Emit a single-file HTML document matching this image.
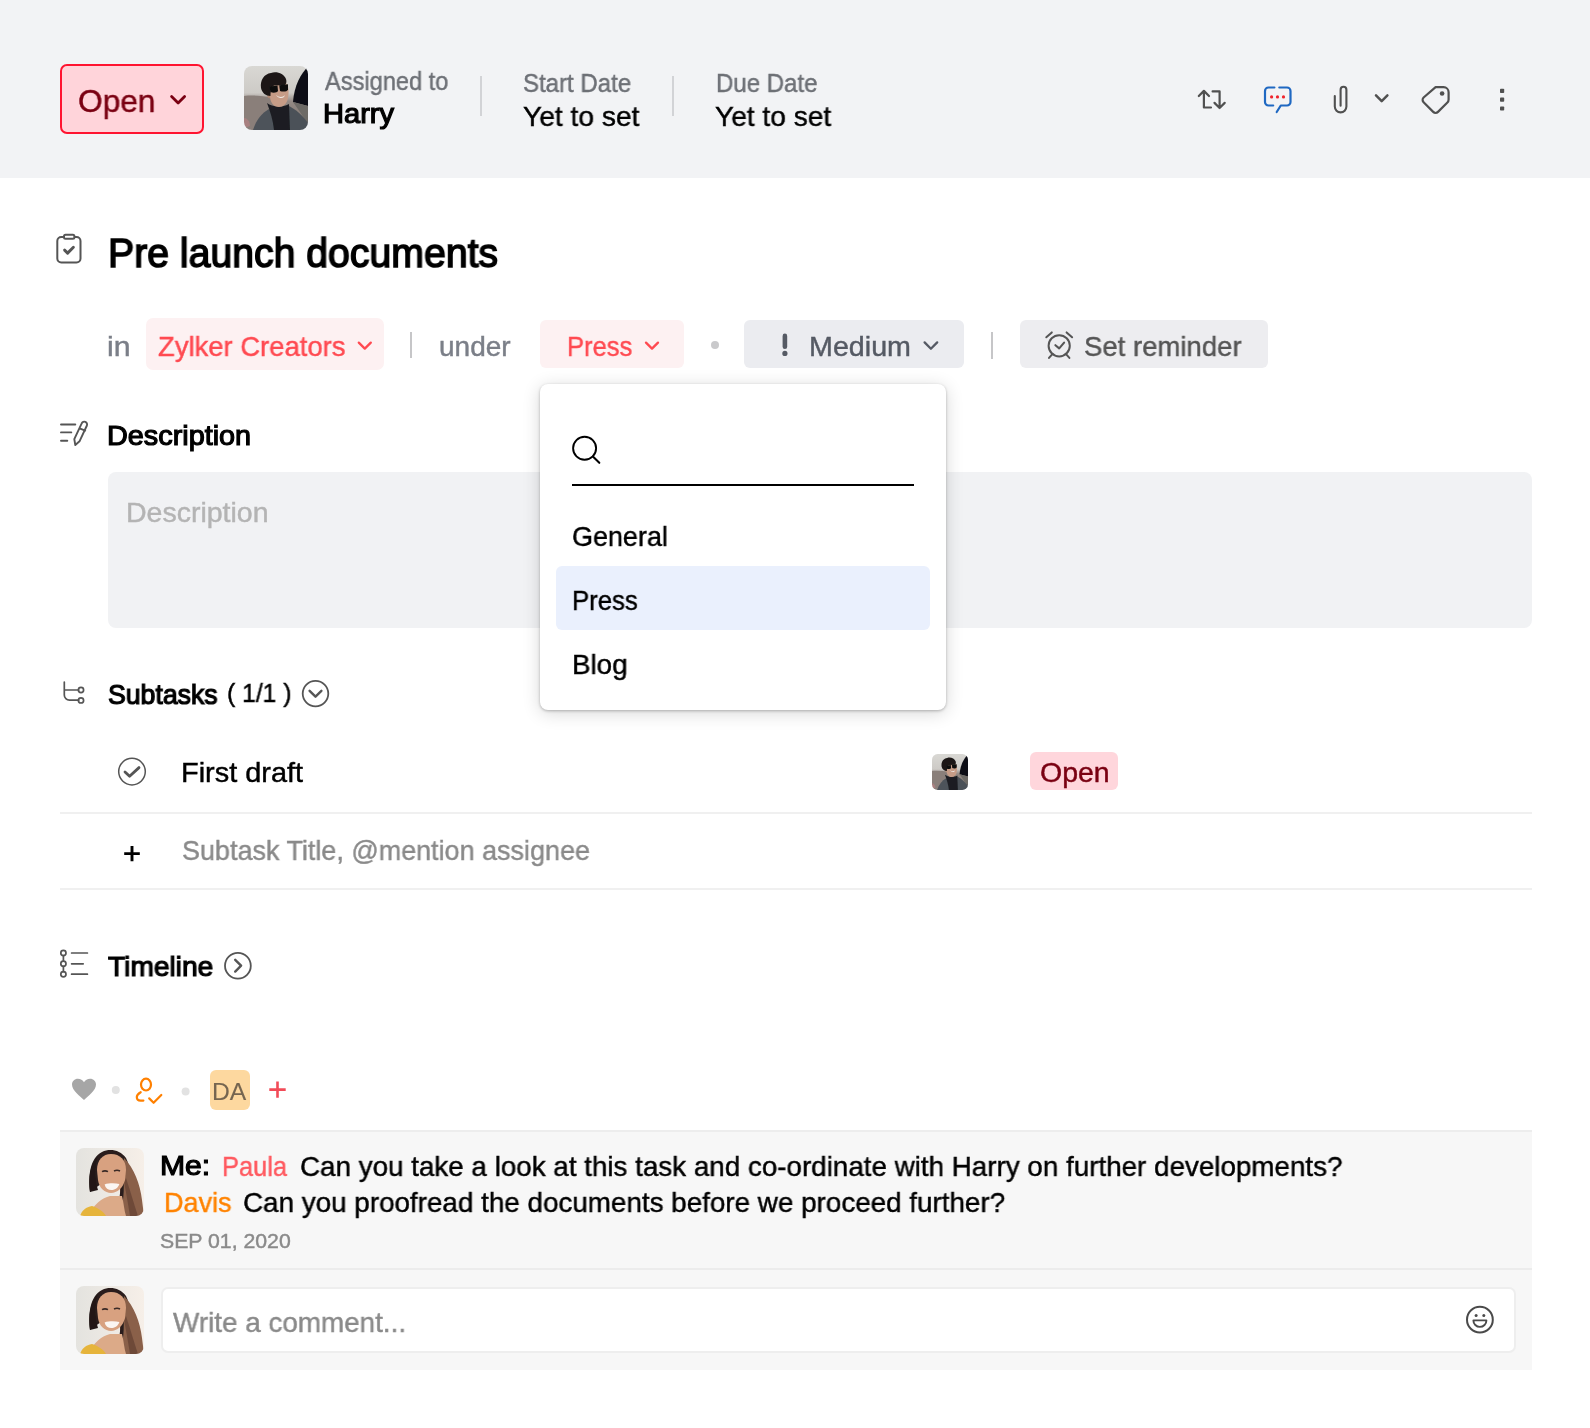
<!DOCTYPE html>
<html><head><meta charset="utf-8"><title>Task</title>
<style>
html,body{margin:0;padding:0;width:1590px;height:1428px;overflow:hidden;background:#fff;font-family:"Liberation Sans",sans-serif}
.t{position:absolute;white-space:nowrap;transform-origin:0 0;will-change:transform;-webkit-text-stroke:0.45px currentColor}
.t.b{-webkit-text-stroke:1.2px currentColor}
#title{-webkit-text-stroke:1.5px currentColor}
.a{position:absolute}
svg{position:absolute;overflow:visible}

#da{-webkit-text-stroke:0.1px currentColor}


</style></head>
<body>
<div id="shapes">
<!-- header band -->
<div class="a" style="left:0;top:0;width:1590px;height:178px;background:#f2f3f5"></div>
<div class="a" style="left:60px;top:64px;width:140px;height:66px;border:2px solid #ff1330;border-radius:7px;background:#ffd4da"></div>
<div class="a" style="left:480px;top:76px;width:2px;height:40px;background:#d2d3d6"></div>
<div class="a" style="left:672px;top:76px;width:2px;height:40px;background:#d2d3d6"></div>

<!-- avatar harry -->
<svg style="left:244px;top:66px" width="64" height="64" viewBox="0 0 64 64">
 <defs><filter id="bl" x="-5%" y="-5%" width="110%" height="110%"><feGaussianBlur stdDeviation="0.7"/></filter><clipPath id="ch1"><rect width="64" height="64" rx="8"/></clipPath>
 <linearGradient id="hb" x1="0" y1="0" x2="0" y2="1"><stop offset="0" stop-color="#d9d8d4"/><stop offset="0.42" stop-color="#cdcac6"/><stop offset="0.55" stop-color="#948a85"/><stop offset="1" stop-color="#7a706b"/></linearGradient></defs>
 <g clip-path="url(#ch1)"><g filter="url(#bl)">
  <rect width="64" height="64" fill="url(#hb)"/>
  <path d="M0 30 C10 29 20 30 30 32 L30 64 L0 64 Z" fill="#8a7f7a"/>
  <path d="M0 52 C3 52 6 55 6 60 L0 62 Z" fill="#a88080"/>
  <path d="M64 1 C57 7 50 20 49 36 L64 40 Z" fill="#0f1019"/>
  <path d="M49 36 L64 40 L64 58 L56 46 Z" fill="#6d6a66"/>
  <path d="M9 64 C12 54 18 47 25 43 L34 50 L38 64 Z" fill="#4d535a"/>
  <path d="M43 39 C52 43 60 51 64 57 L64 64 L40 64 Z" fill="#4b5158"/>
  <path d="M23 37 C28 41 37 42 45 38 L46 64 L30 64 C29 54 26 45 23 37 Z" fill="#1c1f23"/>
  <ellipse cx="25.5" cy="29" rx="2.2" ry="3.2" fill="#b38873"/>
  <path d="M26 19 L42 17 C45 20 45 27 44 32 C43 38 39 41 35 41 C30 41 26.5 37 26 31 Z" fill="#c69c87"/>
  <path d="M17 22 C16 14 20 8 27 7 C33 5 40 8 42 13 C43 16 42 18 41 19 L30 19.5 C27.5 21 26.5 25 26.5 30 C22 30 18 27 17 22 Z" fill="#1b1717"/>
  <path d="M25.5 20.5 L33.5 19.6 L34 25 C33 27 28.5 27 26.5 26 Z" fill="#111"/>
  <path d="M35.2 19.3 L44 18.2 L44 23.5 C43 26 38.5 26 36 25 Z" fill="#111"/>
  <path d="M32 29 C35 31.5 39 31.5 41 29 L40 31 C38 32.5 34 32.5 32 29 Z" fill="#f1ece8"/>
</g></g>
</svg>

<!-- header icons -->
<svg style="left:0;top:0" width="1590" height="180">
 <g fill="none" stroke="#505050" stroke-width="2.2" stroke-linecap="round" stroke-linejoin="round">
  <path d="M1198.8 96 L1203.9 90.9 L1209 96 M1203.9 91 V107.5 H1211"/>
  <path d="M1212.6 91.4 H1219.6 V108 M1214.5 102.9 L1219.6 108 L1224.7 102.9"/>
  <path d="M1334.8 96 V106.6 A5.8 5.8 0 0 0 1346.4 106.6 V89.7 A2.9 2.9 0 0 0 1340.6 89.7 V105.7" stroke-width="2.1"/>
  <path d="M1376 95.4 L1381.7 101.1 L1387.4 95.4" stroke-width="2.5"/>
  <path d="M1435.6 87.2 H1443.6 A5 5 0 0 1 1448.6 92.2 V99.6 A4 4 0 0 1 1447.4 102.5 L1438 111.9 A3.4 3.4 0 0 1 1433.2 111.9 L1423.6 102.3 A3.4 3.4 0 0 1 1423.6 97.5 Z"/>
 </g>
 <circle cx="1442.1" cy="93.5" r="2.3" fill="#505050"/>
 <g fill="#505050"><rect x="1500" y="88.8" width="4.2" height="4.2" rx="0.8"/><rect x="1500" y="97.6" width="4.2" height="4.2" rx="0.8"/><rect x="1500" y="106.4" width="4.2" height="4.2" rx="0.8"/></g>
 <g fill="none" stroke="#1f68c2" stroke-width="2.2" stroke-linecap="round" stroke-linejoin="round">
  <path d="M1274.4 87.5 H1268.5 A3.5 3.5 0 0 0 1265 91 V102 A3.5 3.5 0 0 0 1268.5 105.5 H1273.2"/>
  <path d="M1279.3 87.5 H1287 A3.5 3.5 0 0 1 1290.5 91 V102 A3.5 3.5 0 0 1 1287 105.5 H1280.8 L1276.7 112"/>
 </g>
 <g fill="#f0232b"><circle cx="1271.6" cy="96.9" r="1.6"/><circle cx="1277.5" cy="96.9" r="1.6"/><circle cx="1283.5" cy="96.9" r="1.6"/></g>
 <path d="M171.6 96.5 L178.1 103 L184.6 96.5" fill="none" stroke="#7a0012" stroke-width="2.8" stroke-linecap="round" stroke-linejoin="round"/>
</svg>

<!-- meta pills -->
<div class="a" style="left:146px;top:318px;width:238px;height:52px;border-radius:7px;background:#fdf1f2"></div>
<div class="a" style="left:410px;top:332px;width:2px;height:26px;background:#c6c6c8"></div>
<div class="a" style="left:540px;top:320px;width:144px;height:48px;border-radius:6px;background:#fdf1f2"></div>
<div class="a" style="left:710.6px;top:341.3px;width:8px;height:8px;border-radius:50%;background:#c9c9cb"></div>
<div class="a" style="left:744px;top:320px;width:220px;height:48px;border-radius:6px;background:#ebecf0"></div>
<div class="a" style="left:990.5px;top:332px;width:2px;height:26.5px;background:#c6c6c8"></div>
<div class="a" style="left:1020px;top:320px;width:248px;height:48px;border-radius:6px;background:#ededf0"></div>

<!-- description box -->
<div class="a" style="left:108px;top:472px;width:1424px;height:156px;border-radius:8px;background:#f1f2f4"></div>

<!-- subtask separators -->
<div class="a" style="left:60px;top:812px;width:1472px;height:2px;background:#f0f0f0"></div>
<div class="a" style="left:60px;top:888px;width:1472px;height:2px;background:#f0f0f0"></div>

<!-- Open badge -->
<div class="a" style="left:1030px;top:752px;width:88px;height:38px;border-radius:6px;background:#ffd6dc"></div>

<!-- DA badge -->
<div class="a" style="left:210px;top:1070px;width:40px;height:40px;border-radius:6px;background:#fdd89f"></div>

<!-- comment block -->
<div class="a" style="left:60px;top:1130px;width:1472px;height:240px;background:#f7f7f7"></div>
<div class="a" style="left:60px;top:1130px;width:1472px;height:2px;background:#ededed"></div>
<div class="a" style="left:60px;top:1268px;width:1472px;height:2px;background:#ececec"></div>
<div class="a" style="left:161px;top:1287px;width:1351px;height:62px;border:2px solid #eeeeee;border-radius:7px;background:#fff"></div>

<!-- main icons -->
<svg style="left:0;top:180px" width="1590" height="1248" viewBox="0 180 1590 1248">
 <g fill="none" stroke="#555" stroke-width="2" stroke-linecap="round" stroke-linejoin="round">
  <!-- clipboard -->
  <path d="M63.6 237.1 H61.3 A4 4 0 0 0 57.3 241.1 V258.5 A4 4 0 0 0 61.3 262.5 H76.5 A4 4 0 0 0 80.5 258.5 V241.1 A4 4 0 0 0 76.5 237.1 H74.7"/>
  <rect x="64" y="234.8" width="10.4" height="4" rx="1.5"/>
  <path d="M64.6 250.1 L67.6 253.1 L73.4 247.3" stroke-width="2.9"/>
  <!-- desc icon -->
  <path d="M61 424.5 H75.3 M61 432.4 H71.3 M61 440.7 H67.3" stroke-width="1.9"/>
  <path d="M75.3 445 L74.3 439.2 L81.7 423.4 A2.8 2.8 0 0 1 86.9 425.5 L79.5 441.3 Z M80.2 428.6 L85.2 430.6" stroke-width="1.9"/>
  <!-- subtasks icon -->
  <path d="M64.3 682 V695 A5.2 5.2 0 0 0 69.5 700.2 H78.6 M64.3 690 H78.6" stroke-width="1.7"/>
  <circle cx="81" cy="690" r="2.6" stroke-width="1.7"/>
  <circle cx="81" cy="700.4" r="2.6" stroke-width="1.7"/>
  <circle cx="315.5" cy="693.6" r="12.8" stroke-width="1.8"/>
  <path d="M309.6 690.8 L315.5 696.7 L321.4 690.8" stroke-width="2.4"/>
  <!-- check circle -->
  <circle cx="132" cy="771.6" r="13.3" stroke-width="1.5"/>
  <path d="M125 772 L129.6 776.3 L139 767.6" stroke-width="2.8"/>
  <!-- plus -->
  <path d="M132 846 V861.3 M124.2 853.6 H139.8" stroke="#000" stroke-width="2.9" stroke-linecap="butt"/>
  <!-- timeline icon -->
  <circle cx="63.4" cy="953" r="2.6" stroke-width="1.7"/>
  <circle cx="63.4" cy="963.8" r="2.6" stroke-width="1.7"/>
  <circle cx="63.4" cy="974.2" r="2.6" stroke-width="1.7"/>
  <path d="M63.4 955.6 V961.2 M63.4 966.4 V971.6 M71.6 953 H87.4 M71.6 963.8 H83.2 M71.6 974.2 H87.4" stroke-width="1.7"/>
  <circle cx="237.9" cy="965.7" r="12.9" stroke-width="1.8"/>
  <path d="M235.2 959.8 L241.1 965.7 L235.2 971.6" stroke-width="2.4"/>
  <!-- emoji -->
  <circle cx="1479.9" cy="1319.7" r="12.9" stroke="#4a4a4a" stroke-width="2"/>
  <path d="M1473.4 1320.4 H1486.4 A6.5 6.5 0 0 1 1473.4 1320.4 Z" stroke="#4a4a4a" stroke-width="1.9"/>
 </g>
 <g fill="#4a4a4a"><circle cx="1476.1" cy="1315.6" r="1.5"/><circle cx="1483.8" cy="1315.6" r="1.5"/></g>
 <!-- meta row icons -->
 <path d="M358.8 342.6 L364.8 348.6 L370.8 342.6" fill="none" stroke="#ff4a51" stroke-width="2.3" stroke-linecap="round" stroke-linejoin="round"/>
 <path d="M646 342.6 L652 348.6 L658 342.6" fill="none" stroke="#ff4a51" stroke-width="2.3" stroke-linecap="round" stroke-linejoin="round"/>
 <path d="M924.6 342.4 L930.9 348.7 L937.2 342.4" fill="none" stroke="#555a64" stroke-width="2.3" stroke-linecap="round" stroke-linejoin="round"/>
 <rect x="782.6" y="333.6" width="4.6" height="15.5" rx="2.3" fill="#555a64"/>
 <circle cx="784.9" cy="353.4" r="2.6" fill="#555a64"/>
 <g fill="none" stroke="#555" stroke-width="2" stroke-linecap="round" stroke-linejoin="round">
  <circle cx="1059.2" cy="345.8" r="10.6"/>
  <path d="M1046.3 337.3 L1051.8 332.4 M1066.6 332.4 L1072.1 337.3 M1052.6 353.8 L1049 357.9 M1065.8 353.8 L1069.4 357.9"/>
  <path d="M1055.4 345.2 L1059.2 348.4 L1064.1 342.6" stroke-width="2.1"/>
 </g>
 <!-- reactions -->
 <path d="M84 1100 C80 1096.4 72 1090.6 72 1084.6 C72 1081.2 74.6 1078.8 77.9 1078.8 C80.6 1078.8 82.7 1080.3 84 1082.3 C85.3 1080.3 87.4 1078.8 90.1 1078.8 C93.4 1078.8 96 1081.2 96 1084.6 C96 1090.6 88 1096.4 84 1100 Z" fill="#a6a6a6"/>
 <circle cx="115.8" cy="1090" r="4" fill="#e2e2e2"/>
 <circle cx="185.6" cy="1091.6" r="4" fill="#e2e2e2"/>
 <g fill="none" stroke="#ff8000" stroke-width="2.2" stroke-linecap="round" stroke-linejoin="round">
  <ellipse cx="146" cy="1084.6" rx="5" ry="5.9"/>
  <path d="M140.7 1092.2 C138.2 1093.6 136.8 1095.4 136.8 1097 C136.8 1099.4 138.4 1100.6 140.6 1100.6 H143.4"/>
  <path d="M149.2 1098.4 L153.6 1102.8 L161.3 1095"/>
 </g>
 <path d="M277.5 1081.4 V1097.8 M269.3 1089.6 H285.7" stroke="#f24b58" stroke-width="2.6"/>
</svg>

<!-- subtask avatar -->
<svg style="left:932px;top:754px" width="36" height="36" viewBox="0 0 64 64">
 <defs><clipPath id="ch2"><rect width="64" height="64" rx="10"/></clipPath></defs>
 <g clip-path="url(#ch2)"><g filter="url(#bl)">
  <rect width="64" height="64" fill="url(#hb)"/>
  <path d="M0 30 C10 29 20 30 30 32 L30 64 L0 64 Z" fill="#8a7f7a"/>
  <path d="M0 52 C3 52 6 55 6 60 L0 62 Z" fill="#a88080"/>
  <path d="M64 1 C57 7 50 20 49 36 L64 40 Z" fill="#0f1019"/>
  <path d="M49 36 L64 40 L64 58 L56 46 Z" fill="#6d6a66"/>
  <path d="M9 64 C12 54 18 47 25 43 L34 50 L38 64 Z" fill="#4d535a"/>
  <path d="M43 39 C52 43 60 51 64 57 L64 64 L40 64 Z" fill="#4b5158"/>
  <path d="M23 37 C28 41 37 42 45 38 L46 64 L30 64 C29 54 26 45 23 37 Z" fill="#1c1f23"/>
  <ellipse cx="25.5" cy="29" rx="2.2" ry="3.2" fill="#b38873"/>
  <path d="M26 19 L42 17 C45 20 45 27 44 32 C43 38 39 41 35 41 C30 41 26.5 37 26 31 Z" fill="#c69c87"/>
  <path d="M17 22 C16 14 20 8 27 7 C33 5 40 8 42 13 C43 16 42 18 41 19 L30 19.5 C27.5 21 26.5 25 26.5 30 C22 30 18 27 17 22 Z" fill="#1b1717"/>
  <path d="M25.5 20.5 L33.5 19.6 L34 25 C33 27 28.5 27 26.5 26 Z" fill="#111"/>
  <path d="M35.2 19.3 L44 18.2 L44 23.5 C43 26 38.5 26 36 25 Z" fill="#111"/>
  <path d="M32 29 C35 31.5 39 31.5 41 29 L40 31 C38 32.5 34 32.5 32 29 Z" fill="#f1ece8"/>
</g></g>
</svg>

<!-- woman avatars -->
<svg style="left:76px;top:1148px" width="68" height="68" viewBox="0 0 68 68">
 <defs><clipPath id="cw"><rect width="68" height="68" rx="8"/></clipPath>
 <linearGradient id="wb" x1="0" y1="0" x2="1" y2="0"><stop offset="0" stop-color="#e4e3df"/><stop offset="1" stop-color="#f6efe8"/></linearGradient></defs>
 <g clip-path="url(#cw)"><g filter="url(#bl)">
  <rect width="68" height="68" fill="url(#wb)"/>
  <path d="M44 10 C54 18 58 34 62 50 C64 58 66 64 68 68 L44 68 Z" fill="#7e5642"/>
  <path d="M14 44 C12 28 14 10 26 4 C34 0 44 2 50 10 C54 18 54 26 52 34 L50 50 L44 68 L40 68 C44 50 46 36 44 22 Z" fill="#2a1f1d"/>
  <path d="M48 10 C58 20 64 36 66 52 L68 68 L44 68 C47 56 49 42 47 26 Z" fill="#8a604a"/><path d="M50 30 C54 42 58 56 62 68 L54 68 C52 56 50 44 48 34 Z" fill="#6e4a39"/>
  <path d="M12 68 C18 56 26 50 34 48 L46 48 C48 56 48 62 50 68 Z" fill="#dcaa88"/>
  <path d="M21 22 C21 12 27 6 35 6 C44 6 50 12 50 22 L49 32 C47 40 41 45 35 45 C29 45 23 40 22 32 Z" fill="#d8a180"/>
  <path d="M14 44 C12 30 14 16 22 8 C18 20 19 32 22 42 Z" fill="#211817"/>
  <path d="M26 23.6 C28 22.6 30 22.6 32 23.6 M38 23 C40 22 42 22 44 23" stroke="#3a2a26" stroke-width="1.6" fill="none"/>
  <path d="M28.6 36.4 C33 35 39 35 43.4 36 C42 40.5 38 42 35.5 42 C32 42 29.5 40 28.6 36.4 Z" fill="#fbf6f2"/>
  <path d="M4 68 C6 62 10 59 16 58 C22 60 28 64 30 68 Z" fill="#e6b43a"/>
</g></g>
</svg>
<svg style="left:76px;top:1286px" width="68" height="68" viewBox="0 0 68 68">
 <g clip-path="url(#cw)"><g filter="url(#bl)">
  <rect width="68" height="68" fill="url(#wb)"/>
  <path d="M44 10 C54 18 58 34 62 50 C64 58 66 64 68 68 L44 68 Z" fill="#7e5642"/>
  <path d="M14 44 C12 28 14 10 26 4 C34 0 44 2 50 10 C54 18 54 26 52 34 L50 50 L44 68 L40 68 C44 50 46 36 44 22 Z" fill="#2a1f1d"/>
  <path d="M48 10 C58 20 64 36 66 52 L68 68 L44 68 C47 56 49 42 47 26 Z" fill="#8a604a"/><path d="M50 30 C54 42 58 56 62 68 L54 68 C52 56 50 44 48 34 Z" fill="#6e4a39"/>
  <path d="M12 68 C18 56 26 50 34 48 L46 48 C48 56 48 62 50 68 Z" fill="#dcaa88"/>
  <path d="M21 22 C21 12 27 6 35 6 C44 6 50 12 50 22 L49 32 C47 40 41 45 35 45 C29 45 23 40 22 32 Z" fill="#d8a180"/>
  <path d="M14 44 C12 30 14 16 22 8 C18 20 19 32 22 42 Z" fill="#211817"/>
  <path d="M26 23.6 C28 22.6 30 22.6 32 23.6 M38 23 C40 22 42 22 44 23" stroke="#3a2a26" stroke-width="1.6" fill="none"/>
  <path d="M28.6 36.4 C33 35 39 35 43.4 36 C42 40.5 38 42 35.5 42 C32 42 29.5 40 28.6 36.4 Z" fill="#fbf6f2"/>
  <path d="M4 68 C6 62 10 59 16 58 C22 60 28 64 30 68 Z" fill="#e6b43a"/>
</g></g>
</svg>

<!-- dropdown -->
<div class="a" style="left:540px;top:384px;width:406px;height:326px;border-radius:8px;background:#fff;box-shadow:0 1px 3px rgba(0,0,0,0.26),0 3px 18px rgba(0,0,0,0.16)"></div>
<div class="a" style="left:572px;top:484px;width:342px;height:2px;background:#000"></div>
<div class="a" style="left:556px;top:566px;width:374px;height:64px;border-radius:6px;background:#eaf0fd"></div>
<svg style="left:540px;top:384px" width="406" height="120" viewBox="540 384 406 120">
 <circle cx="584.6" cy="448.2" r="11.5" fill="none" stroke="#000" stroke-width="1.9"/>
 <path d="M592.9 456.6 L599.3 462.8" stroke="#000" stroke-width="2.1" stroke-linecap="round"/>
</svg>

</div>
<div class="t" id="hopen" style="left:78.00px;top:84.90px;font-size:32px;line-height:32px;color:#7a0012;transform:scaleX(0.9882)">Open</div>
<div class="t" id="assg" style="left:324.70px;top:69.20px;font-size:25px;line-height:25px;color:#6d7076;transform:scaleX(0.9441)">Assigned to</div>
<div class="t b" id="harry" style="left:323.00px;top:99.70px;font-size:27.5px;line-height:27.5px;color:#000000;transform:scaleX(1.0566)">Harry</div>
<div class="t" id="sdl" style="left:523.00px;top:71.00px;font-size:25px;line-height:25px;color:#6d7076;transform:scaleX(0.9603)">Start Date</div>
<div class="t" id="sdv" style="left:523.00px;top:101.70px;font-size:28.5px;line-height:28.5px;color:#000000;transform:scaleX(0.9888)">Yet to set</div>
<div class="t" id="ddl" style="left:715.60px;top:71.00px;font-size:25px;line-height:25px;color:#6d7076;transform:scaleX(0.9608)">Due Date</div>
<div class="t" id="ddv" style="left:715.20px;top:101.70px;font-size:28.5px;line-height:28.5px;color:#000000;transform:scaleX(0.9870)">Yet to set</div>
<div class="t b" id="title" style="left:107.60px;top:233.00px;font-size:40px;line-height:40px;color:#000000;transform:scaleX(0.9800)">Pre launch documents</div>
<div class="t" id="in" style="left:107.20px;top:332.60px;font-size:28px;line-height:28px;color:#7b7f88;transform:scaleX(1.0815)">in</div>
<div class="t" id="zyl" style="left:157.90px;top:331.90px;font-size:28.5px;line-height:28.5px;color:#ff4a51;transform:scaleX(0.9627)">Zylker Creators</div>
<div class="t" id="under" style="left:439.00px;top:333.00px;font-size:28px;line-height:28px;color:#7b7f88;transform:scaleX(1.0001)">under</div>
<div class="t" id="press" style="left:566.80px;top:332.00px;font-size:28.5px;line-height:28.5px;color:#ff4a51;transform:scaleX(0.8978)">Press</div>
<div class="t" id="medium" style="left:809.40px;top:332.00px;font-size:28.5px;line-height:28.5px;color:#555a64;transform:scaleX(1.0060)">Medium</div>
<div class="t" id="setrem" style="left:1083.70px;top:331.80px;font-size:28.5px;line-height:28.5px;color:#555555;transform:scaleX(0.9660)">Set reminder</div>
<div class="t b" id="deschd" style="left:107.40px;top:420.90px;font-size:28.5px;line-height:28.5px;color:#000000;transform:scaleX(1.0110)">Description</div>
<div class="t" id="descph" style="left:125.80px;top:497.70px;font-size:28.5px;line-height:28.5px;color:#b4b4b4;transform:scaleX(0.9984)">Description</div>
<div class="t" id="dgen" style="left:571.60px;top:522.30px;font-size:28.5px;line-height:28.5px;color:#000000;transform:scaleX(0.9459)">General</div>
<div class="t" id="dpress" style="left:571.60px;top:586.20px;font-size:28.5px;line-height:28.5px;color:#000000;transform:scaleX(0.9044)">Press</div>
<div class="t" id="dblog" style="left:571.90px;top:649.90px;font-size:28.5px;line-height:28.5px;color:#000000;transform:scaleX(0.9741)">Blog</div>
<div class="t b" id="subhd" style="left:107.60px;top:679.70px;font-size:28.5px;line-height:28.5px;color:#000000;transform:scaleX(0.9347)">Subtasks</div>
<div class="t" id="subcnt" style="left:227.40px;top:680.70px;font-size:25px;line-height:25px;color:#000000;transform:scaleX(0.9874)">( 1/1 )</div>
<div class="t" id="first" style="left:181.00px;top:757.80px;font-size:28.5px;line-height:28.5px;color:#000000;transform:scaleX(1.0143)">First draft</div>
<div class="t" id="sopen" style="left:1039.90px;top:758.00px;font-size:28.5px;line-height:28.5px;color:#7a0012;transform:scaleX(0.9978)">Open</div>
<div class="t" id="subph" style="left:181.70px;top:835.80px;font-size:28.5px;line-height:28.5px;color:#8a8a8a;transform:scaleX(0.9459)">Subtask Title, @mention assignee</div>
<div class="t b" id="tl" style="left:107.80px;top:952.10px;font-size:28.5px;line-height:28.5px;color:#000000;transform:scaleX(0.9870)">Timeline</div>
<div class="t" id="da" style="left:212.30px;top:1080.00px;font-size:24.5px;line-height:24.5px;color:#756550;transform:scaleX(1.0068)">DA</div>
<div class="t b" id="me" style="left:159.80px;top:1150.80px;font-size:28.5px;line-height:28.5px;color:#000000;transform:scaleX(1.0575)">Me:</div>
<div class="t" id="paula" style="left:222.00px;top:1151.80px;font-size:28.5px;line-height:28.5px;color:#ff5a60;transform:scaleX(0.8933)">Paula</div>
<div class="t" id="l1" style="left:299.70px;top:1151.80px;font-size:28.5px;line-height:28.5px;color:#000000;transform:scaleX(0.9749)">Can you take a look at this task and co-ordinate with Harry on further developments?</div>
<div class="t" id="davis" style="left:163.70px;top:1187.70px;font-size:28.5px;line-height:28.5px;color:#ff8300;transform:scaleX(0.9480)">Davis</div>
<div class="t" id="l2" style="left:242.70px;top:1187.70px;font-size:28.5px;line-height:28.5px;color:#000000;transform:scaleX(0.9758)">Can you proofread the documents before we proceed further?</div>
<div class="t" id="date" style="left:159.70px;top:1229.70px;font-size:21px;line-height:21px;color:#8a8a8a;transform:scaleX(1.0115)">SEP 01, 2020</div>
<div class="t" id="write" style="left:172.60px;top:1307.70px;font-size:28.5px;line-height:28.5px;color:#8a8a8a;transform:scaleX(0.9767)">Write a comment...</div>
</body></html>
